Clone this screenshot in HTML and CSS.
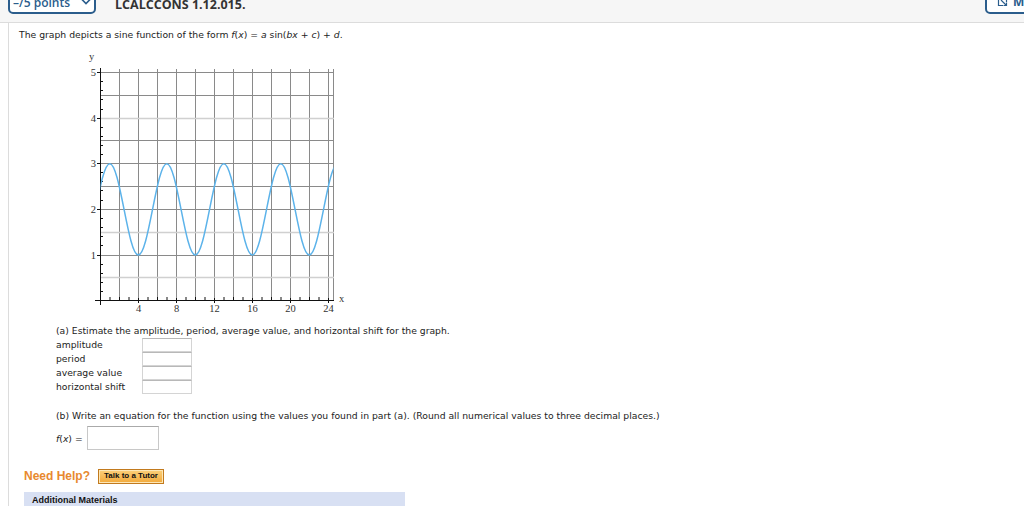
FILE: index.html
```html
<!DOCTYPE html>
<html>
<head>
<meta charset="utf-8">
<link rel="stylesheet" href="styles.css">
</head>
<body>
<header class="topbar">
  <button class="points"><span>–/5 points</span>
    <svg class="chev" width="12" height="8" viewBox="0 0 12 8"><path d="M1 1.5 L6 6.5 L11 1.5" fill="none" stroke="#2b5d8c" stroke-width="1.6"/></svg>
  </button>
  <span class="code">LCALCCONS 1.12.015.</span>
  <span class="spacer"></span>
  <button class="notes">
    <svg width="11" height="11" viewBox="0 0 11 11"><path d="M1.5 1.5 H9.5 V6 M1.5 1.5 V9.5 H6" fill="none" stroke="#2b5d8c" stroke-width="1.2"/><path d="M4 4 L9.5 9.5 M9.5 6.5 V9.5 H6.5" fill="none" stroke="#2b5d8c" stroke-width="1.2"/></svg>
    <span>My Notes</span>
  </button>
</header>
<main class="question">
  <p class="prompt">The graph depicts a sine function of the form <i>f</i>(<i>x</i>) = <i>a</i> sin(<i>bx</i> + <i>c</i>) + <i>d</i>.</p>
  <svg class="graph" width="280" height="270" viewBox="80 46 280 270">
    <defs><clipPath id="clip"><rect x="100.5" y="60" width="233" height="250"/></clipPath></defs>
    <g class="grid-dark" stroke="#8a8a8a" stroke-width="1">
      <path d="M119.5 69 V300 M138.5 69 V300 M157.5 69 V300 M176.5 69 V300 M195.5 69 V300 M214.5 69 V300 M233.5 69 V300 M252.5 69 V300 M271.5 69 V300 M290.5 69 V300 M309.5 69 V300 M328.5 69 V300 M333.5 69 V300"/>
      <path d="M100 72.5 H334 M100 95.5 H334 M100 140.5 H334 M100 163.5 H334 M100 186.5 H334 M100 209.5 H334 M100 255.5 H334"/>
    </g>
    <g stroke="#d0d0d0" stroke-width="1.3">
      <path d="M101 118.5 H334 M101 232.5 H334 M101 277.5 H334"/>
    </g>
    <g stroke="#111" stroke-width="1">
      <path d="M100.5 68 V305 M95 300.5 H334"/>
      <path d="M110 300 v-3 M119.5 300 v-3 M129 300 v-3 M148 300 v-3 M157.5 300 v-3 M167 300 v-3 M186 300 v-3 M195.5 300 v-3 M205 300 v-3 M224 300 v-3 M233.5 300 v-3 M243 300 v-3 M262 300 v-3 M271.5 300 v-3 M281 300 v-3 M300 300 v-3 M309.5 300 v-3 M319 300 v-3"/>
      <path d="M138.5 298 v5 M176.5 298 v5 M214.5 298 v5 M252.5 298 v5 M290.5 298 v5 M328.5 298 v5"/>
      <path d="M97 72.5 h4 M97 118.5 h4 M97 163.5 h4 M97 209.5 h4 M97 255.5 h4"/>
      <path d="M101 81.5 h2 M101 90.5 h2 M101 99.5 h2 M101 109.5 h2 M101 127.5 h2 M101 136.5 h2 M101 145.5 h2 M101 154.5 h2 M101 172.5 h2 M101 181.5 h2 M101 190.5 h2 M101 200.5 h2 M101 218.5 h2 M101 227.5 h2 M101 236.5 h2 M101 245.5 h2 M101 264.5 h2 M101 273.5 h2 M101 282.5 h2 M101 291.5 h2"/>
    </g>
    <path clip-path="url(#clip)" fill="none" stroke="#5cb3ea" stroke-width="1.5"
      d="M95.55 209.34
         c4.647 -23.4 9.093 -45.68 14.25 -45.68 c5.157 0 9.603 22.28 14.25 45.68 c4.647 23.4 9.093 45.68 14.25 45.68 c5.157 0 9.603 -22.28 14.25 -45.68
         c4.647 -23.4 9.093 -45.68 14.25 -45.68 c5.157 0 9.603 22.28 14.25 45.68 c4.647 23.4 9.093 45.68 14.25 45.68 c5.157 0 9.603 -22.28 14.25 -45.68
         c4.647 -23.4 9.093 -45.68 14.25 -45.68 c5.157 0 9.603 22.28 14.25 45.68 c4.647 23.4 9.093 45.68 14.25 45.68 c5.157 0 9.603 -22.28 14.25 -45.68
         c4.647 -23.4 9.093 -45.68 14.25 -45.68 c5.157 0 9.603 22.28 14.25 45.68 c4.647 23.4 9.093 45.68 14.25 45.68 c5.157 0 9.603 -22.28 14.25 -45.68
         c4.647 -23.4 9.093 -45.68 14.25 -45.68 c5.157 0 9.603 22.28 14.25 45.68"/>
    <g class="labels" font-family="Liberation Serif, serif" font-size="10.5" fill="#333">
      <text x="89" y="60">y</text>
      <text x="96" y="76" text-anchor="end">5</text>
      <text x="96" y="122" text-anchor="end">4</text>
      <text x="96" y="167" text-anchor="end">3</text>
      <text x="96" y="213" text-anchor="end">2</text>
      <text x="96" y="259" text-anchor="end">1</text>
      <text x="138.5" y="312" text-anchor="middle">4</text>
      <text x="176.5" y="312" text-anchor="middle">8</text>
      <text x="214.5" y="312" text-anchor="middle">12</text>
      <text x="252.5" y="312" text-anchor="middle">16</text>
      <text x="290.5" y="312" text-anchor="middle">20</text>
      <text x="328.5" y="312" text-anchor="middle">24</text>
      <text x="339" y="302">x</text>
    </g>
  </svg>
  <section class="part part-a">
    <p>(a) Estimate the amplitude, period, average value, and horizontal shift for the graph.</p>
    <div class="answers">
      <label>amplitude</label><span class="box"></span>
      <label>period</label><span class="box"></span>
      <label>average value</label><span class="box"></span>
      <label>horizontal shift</label><span class="box"></span>
    </div>
  </section>
  <section class="part part-b">
    <p>(b) Write an equation for the function using the values you found in part (a). (Round all numerical values to three decimal places.)</p>
    <div class="eq"><span><i>f</i>(<i>x</i>) =</span><span class="bigbox"></span></div>
  </section>
  <div class="help">
    <span class="need">Need Help?</span>
    <button class="tutor">Talk to a Tutor</button>
  </div>
  <div class="materials">Additional Materials</div>
</main>
</body>
</html>
```
FILE: styles.css
```css
html, body {
  margin: 0;
  padding: 0;
  background: #fff;
  overflow: hidden;
}
body {
  font-family: "DejaVu Sans", Verdana, sans-serif;
  font-size: 9.25px;
  color: #222;
  height: 506px;
}
.topbar {
  height: 22px;
  background: #f6f6f6;
  border-bottom: 1px solid #dcdcdc;
  display: flex;
  align-items: flex-end;
  padding-left: 8px;
  overflow: hidden;
}
.points {
  box-sizing: border-box;
  width: 88px;
  height: 30px;
  margin-bottom: 8px;
  background: #fff;
  border: 2px solid #2b5d8c;
  border-radius: 5px;
  color: #2b5d8c;
  font-family: "Open Sans", "Noto Sans", sans-serif;
  font-size: 12px;
  font-weight: 600;
  display: flex;
  align-items: flex-end;
  justify-content: space-between;
  padding: 0 2px 1px 3px;
  line-height: 16px;
  white-space: nowrap;
}
.points .chev { margin-bottom: 6px; }
.code {
  margin-left: 19px;
  margin-bottom: 8px;
  font-family: "Open Sans", "Noto Sans", sans-serif;
  font-weight: 700;
  font-size: 12.5px;
  color: #333;
  line-height: 18px;
  white-space: nowrap;
}
.spacer { flex: 1; }
.notes {
  box-sizing: border-box;
  width: 80px;
  height: 30px;
  margin-bottom: 8px;
  margin-right: -41px;
  background: #fff;
  border: 2px solid #2b5d8c;
  border-radius: 5px;
  display: flex;
  align-items: flex-end;
  gap: 5px;
  padding: 0 0 3px 10px;
  color: #2b5d8c;
  font-family: "Open Sans", "Noto Sans", sans-serif;
  font-weight: 700;
  font-size: 12px;
  line-height: 14px;
  white-space: nowrap;
}
.notes svg { margin-bottom: 2px; flex: none; }
.question {
  margin-left: 8px;
  border-left: 1px solid #dcdcdc;
  padding-left: 10px;
  height: 483px;
}
.prompt {
  margin: 0;
  padding-top: 5px;
  line-height: 14px;
}
.graph {
  display: block;
  margin: 4px 0 0 61px;
}
.part p {
  margin: 0;
  line-height: 14px;
}
.part-a {
  margin: 8px 0 0 37px;
}
.answers {
  display: grid;
  grid-template-columns: 86px 50px;
  grid-auto-rows: 14px;
  line-height: 14px;
}
.box {
  box-sizing: border-box;
  border: 1px solid #d4d4d4;
  border-top-color: #b8b8b8;
  background: #fff;
}
.part-b {
  margin: 15px 0 0 37px;
}
.eq {
  display: flex;
  align-items: center;
  gap: 4px;
  margin-top: 3px;
}
.bigbox {
  box-sizing: border-box;
  width: 72px;
  height: 24px;
  border: 1px solid #c8c8c8;
  border-top-color: #aaa;
}
.help {
  display: flex;
  align-items: center;
  gap: 8px;
  margin: 17px 0 0 5px;
  height: 18px;
}
.need {
  font-family: "Liberation Sans", Arial, sans-serif;
  font-weight: 700;
  font-size: 12px;
  color: #e8892f;
}
.tutor {
  box-sizing: border-box;
  height: 15px;
  padding: 0 5px;
  border: 1px solid #c27a1e;
  background: linear-gradient(#fbd07a, #f2a93b);
  box-shadow: inset 0 0 0 1px #fde7b6;
  font-family: "Liberation Sans", Arial, sans-serif;
  font-weight: 700;
  font-size: 8px;
  color: #111;
  line-height: 12px;
}
.materials {
  margin: 7px 0 0 5px;
  width: 373px;
  padding-left: 8px;
  height: 20px;
  background: #d8e0f3;
  font-family: "Liberation Sans", Arial, sans-serif;
  font-weight: 700;
  font-size: 9px;
  line-height: 17px;
  color: #111;
}
```
